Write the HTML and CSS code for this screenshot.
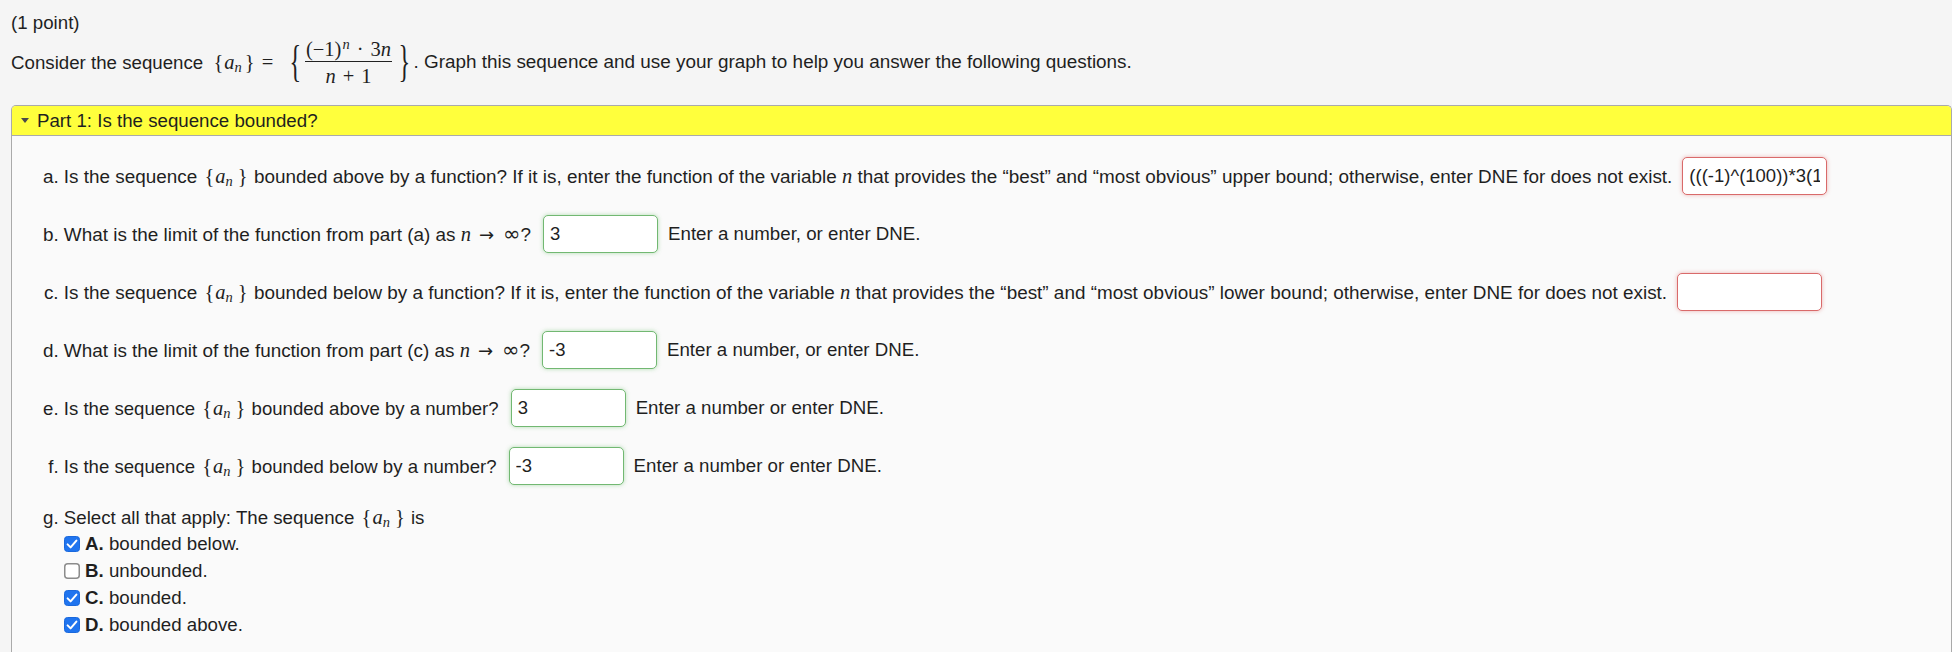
FILE: index.html
```html
<!DOCTYPE html>
<html>
<head>
<meta charset="utf-8">
<link rel="stylesheet" href="styles.css">
</head>
<body>
<div class="page">
  <div class="points">(1 point)</div>
  <div class="intro">
    <span class="txt">Consider the sequence <span class="m iset"><span class="lb">{</span><span class="v">a</span><sub class="v">n</sub><span class="rb">}</span></span> <span class="m eq">=</span></span>
    <span class="big">
      <span class="bigbr">{</span>
      <span class="frac">
        <span class="num m">(−1)<sup class="v">n</sup><span class="dot">·</span>3<span class="v">n</span></span>
        <span class="bar"></span>
        <span class="den m"><span class="v">n</span><span class="plus">+</span>1</span>
      </span>
      <span class="bigbr">}</span>
    </span>
    <span class="txt tail">. Graph this sequence and use your graph to help you answer the following questions.</span>
  </div>

  <div class="part">
    <div class="part-head"><span class="tri"></span>Part 1: Is the sequence bounded?</div>
    <div class="part-body">
      <div class="row">
        <span class="q"><span class="mk">a.</span> Is the sequence <span class="m set"><span class="lb">{</span><span class="v">a</span><sub class="v">n</sub><span class="rb">}</span></span> bounded above by a function? If it is, enter the function of the variable <span class="m v">n</span> that provides the “best” and “most obvious” upper bound; otherwise, enter DNE for does not exist.</span>
        <input class="ans wide bad" type="text" value="(((-1)^(100))*3(100)/(100+1))">
      </div>
      <div class="row">
        <span class="q"><span class="mk">b.</span> What is the limit of the function from part (a) as <span class="m"><span class="v">n</span><span class="arr">→</span><span class="inf">∞</span></span>?</span>
        <input class="ans good" type="text" value="3">
        <span class="hint">Enter a number, or enter DNE.</span>
      </div>
      <div class="row">
        <span class="q"><span class="mk">c.</span> Is the sequence <span class="m set"><span class="lb">{</span><span class="v">a</span><sub class="v">n</sub><span class="rb">}</span></span> bounded below by a function? If it is, enter the function of the variable <span class="m v">n</span> that provides the “best” and “most obvious” lower bound; otherwise, enter DNE for does not exist.</span>
        <input class="ans wide bad" type="text" value="">
      </div>
      <div class="row">
        <span class="q"><span class="mk">d.</span> What is the limit of the function from part (c) as <span class="m"><span class="v">n</span><span class="arr">→</span><span class="inf">∞</span></span>?</span>
        <input class="ans good" type="text" value="-3">
        <span class="hint">Enter a number, or enter DNE.</span>
      </div>
      <div class="row">
        <span class="q short"><span class="mk">e.</span> Is the sequence <span class="m set"><span class="lb">{</span><span class="v">a</span><sub class="v">n</sub><span class="rb">}</span></span> bounded above by a number?</span>
        <input class="ans good" type="text" value="3">
        <span class="hint">Enter a number or enter DNE.</span>
      </div>
      <div class="row">
        <span class="q short"><span class="mk">f.</span> Is the sequence <span class="m set"><span class="lb">{</span><span class="v">a</span><sub class="v">n</sub><span class="rb">}</span></span> bounded below by a number?</span>
        <input class="ans good" type="text" value="-3">
        <span class="hint">Enter a number or enter DNE.</span>
      </div>
      <div class="group">
        <div class="gtitle"><span class="mk">g.</span> Select all that apply: The sequence <span class="m set"><span class="lb">{</span><span class="v">a</span><sub class="v">n</sub><span class="rb">}</span></span> is</div>
        <div class="opt"><svg class="cb" viewBox="0 0 16 16"><rect x="0.5" y="0.5" width="15" height="15" rx="3" fill="#1f74ef" stroke="#1a68dc"/><path d="M3.6 8.4 L6.6 11.4 L12.4 4.6" fill="none" stroke="#fff" stroke-width="2" stroke-linecap="round" stroke-linejoin="round"/></svg><b>A.</b>&nbsp;bounded below.</div>
        <div class="opt"><svg class="cb" viewBox="0 0 16 16"><rect x="0.75" y="0.75" width="14.5" height="14.5" rx="3" fill="#fff" stroke="#8c8c8c" stroke-width="1.5"/></svg><b>B.</b>&nbsp;unbounded.</div>
        <div class="opt"><svg class="cb" viewBox="0 0 16 16"><rect x="0.5" y="0.5" width="15" height="15" rx="3" fill="#1f74ef" stroke="#1a68dc"/><path d="M3.6 8.4 L6.6 11.4 L12.4 4.6" fill="none" stroke="#fff" stroke-width="2" stroke-linecap="round" stroke-linejoin="round"/></svg><b>C.</b>&nbsp;bounded.</div>
        <div class="opt"><svg class="cb" viewBox="0 0 16 16"><rect x="0.5" y="0.5" width="15" height="15" rx="3" fill="#1f74ef" stroke="#1a68dc"/><path d="M3.6 8.4 L6.6 11.4 L12.4 4.6" fill="none" stroke="#fff" stroke-width="2" stroke-linecap="round" stroke-linejoin="round"/></svg><b>D.</b>&nbsp;bounded above.</div>
      </div>
    </div>
  </div>
</div>
</body>
</html>
```

FILE: styles.css
```css
html, body {
  margin: 0;
  padding: 0;
  height: 652px;
  overflow: hidden;
  background: #f5f5f5;
}
body {
  font-family: "Liberation Sans", Arial, sans-serif;
  font-size: 18.7px;
  color: #1f1f1f;
}
.page {
  padding: 12px 0 0 11px;
}
.points {
  line-height: 22px;
}
.intro {
  display: flex;
  align-items: center;
  height: 54px;
  margin-top: 1px;
  white-space: nowrap;
}
.txt {
  line-height: 22px;
}
.m {
  font-family: "Liberation Serif", "DejaVu Serif", serif;
  font-size: 20.5px;
}
.v {
  font-style: italic;
}
sub.v {
  font-size: 14.5px;
  vertical-align: -3px;
  line-height: 0;
}
.set .lb {
  margin-left: 2px;
  margin-right: 1px;
}
.set .rb {
  margin-left: 5px;
  margin-right: 1px;
}
.iset .lb {
  margin-left: 5px;
  margin-right: 1px;
}
.iset .rb {
  margin-left: 3px;
}
.eq {
  margin-left: 2px;
}
.big {
  display: inline-flex;
  align-items: center;
  margin-left: 17px;
}
.bigbr {
  font-family: "Liberation Serif", "DejaVu Serif", serif;
  font-size: 22px;
  line-height: 22px;
  display: inline-block;
  transform: scale(1.1, 2.05);
}
.frac {
  display: inline-flex;
  flex-direction: column;
  align-items: center;
  margin: 0 7px 0 4px;
}
.num {
  line-height: 24px;
  padding: 0 1px;
}
.num sup {
  font-size: 14.5px;
  line-height: 0;
  vertical-align: 7px;
  margin-left: 1px;
}
.dot {
  margin: 0 7px;
}
.bar {
  align-self: stretch;
  height: 1px;
  background: #222;
}
.den {
  line-height: 24px;
  padding-top: 2px;
}
.plus {
  margin: 0 7px;
}
.tail {
  margin-left: 4px;
  font-size: 18.9px;
}
.part {
  margin-top: 16px;
  border: 1px solid #aaaaaa;
  border-bottom: none;
  border-radius: 5px 5px 0 0;
  background: #fafafa;
  overflow: hidden;
}
.part-head {
  display: flex;
  align-items: center;
  height: 29px;
  background: #ffff3c;
  border-bottom: 1px solid #aaaaaa;
  padding-left: 9px;
  white-space: nowrap;
}
.tri {
  width: 0;
  height: 0;
  border-left: 4px solid transparent;
  border-right: 4px solid transparent;
  border-top: 5px solid #4a4a4a;
  margin-right: 8px;
}
.part-body {
  padding: 21px 0 40px 31px;
  display: flex;
  flex-direction: column;
  gap: 20px;
}
.row {
  display: flex;
  align-items: center;
  min-height: 38px;
  white-space: nowrap;
}
.q {
  font-size: 18.9px;
}
.q.short {
  font-size: 18.6px;
}
.mk {
  display: inline-block;
  width: 15.6px;
  text-align: right;
}
.arr {
  display: inline-block;
  font-family: "DejaVu Sans", sans-serif;
  font-size: 18px;
  margin: 0 9px 0 8px;
}
.inf {
  display: inline-block;
  font-family: "DejaVu Sans", sans-serif;
  font-size: 21px;
}
.ans {
  box-sizing: border-box;
  height: 38px;
  width: 115px;
  margin-left: 12px;
  padding: 0 6px;
  font-family: "Liberation Sans", Arial, sans-serif;
  font-size: 18.5px;
  color: #1f1f1f;
  background: #fff;
  border-radius: 5px;
  outline: none;
}
.ans.wide {
  width: 145px;
  margin-left: 10px;
}
.good {
  border: 1px solid #72b872;
  box-shadow: 0 0 4px rgba(92, 184, 92, 0.45);
}
.bad {
  border: 1px solid #d96a6a;
  box-shadow: 0 0 4px rgba(217, 83, 79, 0.4);
}
.hint {
  margin-left: 10px;
}
.group {
  display: flex;
  flex-direction: column;
}
.gtitle {
  line-height: 24px;
  white-space: nowrap;
}
.opt {
  display: flex;
  align-items: center;
  height: 27px;
  padding-left: 21px;
  white-space: nowrap;
}
.cb {
  width: 16px;
  height: 16px;
  margin-right: 5px;
  flex: none;
}
.opt b {
  font-weight: bold;
}
```
